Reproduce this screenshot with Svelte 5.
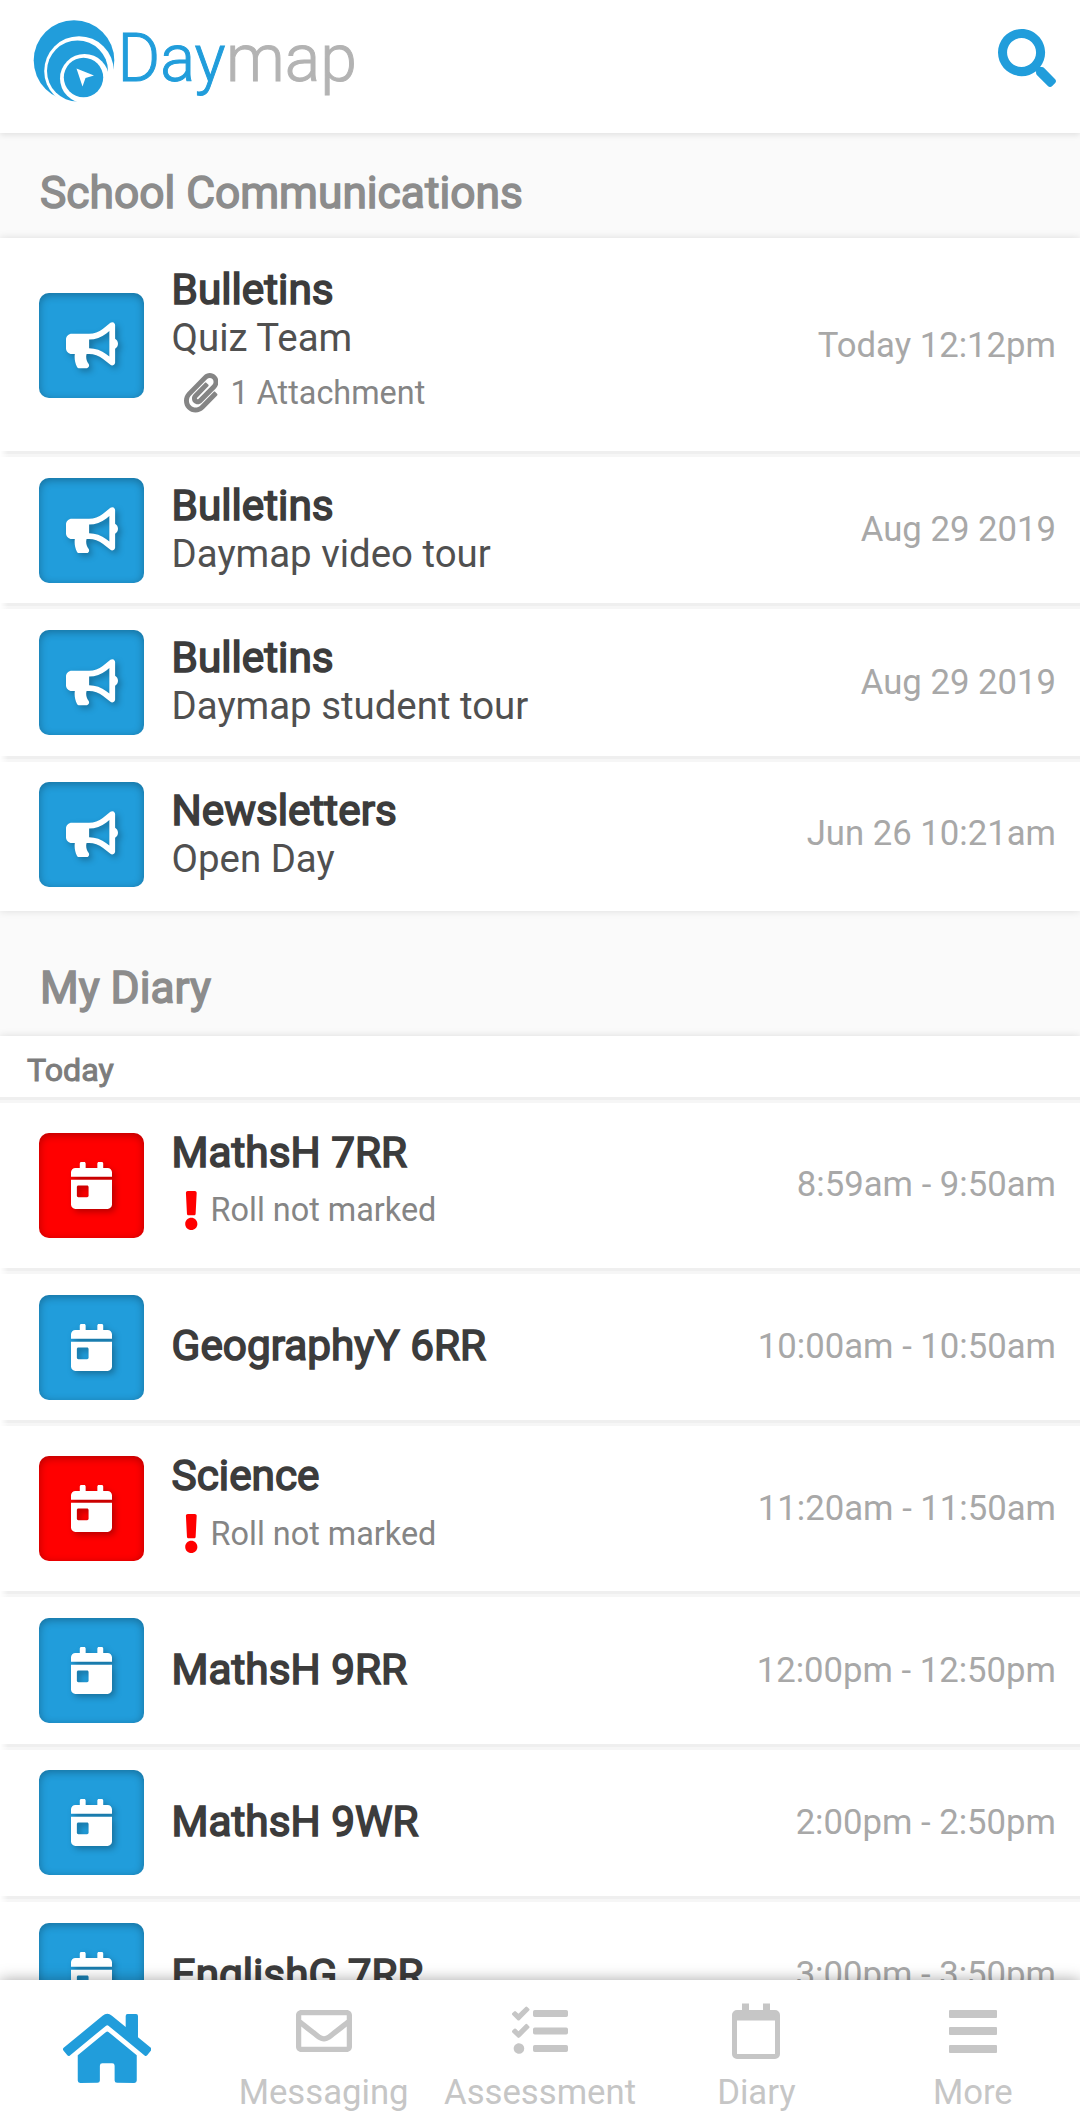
<script>
  const bulletins = [
    { title: 'Bulletins', text: 'Quiz Team', attachments: 1, time: 'Today 12:12pm' },
    { title: 'Bulletins', text: 'Daymap video tour', time: 'Aug 29 2019' },
    { title: 'Bulletins', text: 'Daymap student tour', time: 'Aug 29 2019' },
    { title: 'Newsletters', text: 'Open Day', time: 'Jun 26 10:21am' }
  ];

  const lessons = [
    { title: 'MathsH 7RR', time: '8:59am - 9:50am', unmarked: true },
    { title: 'GeographyY 6RR', time: '10:00am - 10:50am' },
    { title: 'Science', time: '11:20am - 11:50am', unmarked: true },
    { title: 'MathsH 9RR', time: '12:00pm - 12:50pm' },
    { title: 'MathsH 9WR', time: '2:00pm - 2:50pm' },
    { title: 'EnglishG 7RR', time: '3:00pm - 3:50pm' }
  ];
</script>

<div class="app">
  <header>
    <svg class="logo" width="340" height="90" viewBox="0 0 340 90">
      <circle cx="44" cy="48.5" r="40.3" fill="#219ddb" />
      <circle cx="49" cy="59" r="34.8" fill="#fff" />
      <circle cx="47.5" cy="59" r="30.5" fill="#219ddb" />
      <circle cx="54.5" cy="66.5" r="24.5" fill="#fff" />
      <circle cx="53.5" cy="65.5" r="19.7" fill="#219ddb" />
      <path d="M46.5 56.5l17.5 7-8.5 2.5-3 8.5z" fill="#fff" />
      <text x="87.5" y="68.5" class="day" textLength="108" lengthAdjust="spacingAndGlyphs">Day</text>
      <text x="196" y="68.5" class="map" textLength="131" lengthAdjust="spacingAndGlyphs">map</text>
    </svg>
    <button class="search" aria-label="Search">
      <svg width="58" height="58" viewBox="0 0 512 512">
        <path d="M505 442.7L405.3 343c-4.5-4.5-10.6-7-17-7H372c27.6-35.3 44-79.7 44-128C416 93.1 322.9 0 208 0S0 93.1 0 208s93.1 208 208 208c48.3 0 92.7-16.4 128-44v16.3c0 6.4 2.5 12.5 7 17l99.7 99.7c9.4 9.4 24.6 9.4 33.9 0l28.3-28.3c9.4-9.4 9.4-24.6.1-34zM208 336c-70.7 0-128-57.2-128-128 0-70.7 57.2-128 128-128 70.7 0 128 57.2 128 128 0 70.7-57.2 128-128 128z" />
      </svg>
    </button>
  </header>

  <main>
    <h2>School Communications</h2>
    <div class="list">
      {#each bulletins as item}
        <div class="row" class:attached={item.attachments}>
          <div class="tile">
            <svg width="52" height="46.5" viewBox="0 0 576 512">
              <path d="M576 240c0-23.63-12.95-44.04-32-55.12V32.01C544 23.26 537.02 0 512 0c-7.12 0-14.19 2.38-19.98 7.02l-85.03 68.03C364.28 109.19 310.66 128 256 128H64c-35.35 0-64 28.65-64 64v96c0 35.35 28.65 64 64 64h33.7c-1.39 10.48-2.18 21.14-2.18 32 0 39.77 9.26 77.35 25.56 110.94 5.19 10.69 16.52 17.06 28.4 17.06h74.28c26.05 0 41.69-29.84 25.9-50.56-16.4-21.52-26.15-48.36-26.15-77.44 0-11.11 1.62-21.79 4.41-32H256c54.66 0 108.28 18.81 150.98 52.95l85.03 68.03a32.023 32.023 0 0 0 19.98 7.02c24.92 0 32-22.78 32-32V295.13C563.05 284.04 576 263.63 576 240zm-96 141.42l-33.05-26.44C392.95 311.78 325.12 288 256 288v-96c69.12 0 136.95-23.78 190.95-66.98L480 98.58v282.84z" />
            </svg>
          </div>
          <div class="body">
            <div class="title">{item.title}</div>
            <div class="text">{item.text}</div>
            {#if item.attachments}
              <div class="note attachment">
                <svg width="34.5" height="39.5" viewBox="0 0 448 512">
                  <path d="M43.246 466.142c-58.43-60.289-57.341-157.511 1.386-217.581L254.392 34c44.316-45.332 116.351-45.336 160.671 0 43.89 44.894 43.943 117.329 0 162.276L232.214 383.128c-29.855 30.537-78.633 30.111-107.982-.998-28.275-29.97-27.368-77.473 1.452-106.953l143.743-146.835c6.182-6.314 16.312-6.422 22.626-.241l22.861 22.379c6.315 6.182 6.422 16.312.241 22.626L171.427 319.927c-4.932 5.045-5.236 13.428-.648 18.292 4.372 4.634 11.245 4.711 15.688.165l182.849-186.851c19.613-20.062 19.613-52.725-.011-72.798-19.189-19.627-49.957-19.637-69.154 0L90.39 293.295c-34.763 35.56-35.299 93.12-1.191 128.313 34.01 35.093 88.985 35.137 123.058.286l172.06-175.999c6.177-6.319 16.307-6.433 22.626-.256l22.877 22.364c6.319 6.177 6.434 16.307.256 22.626l-172.06 175.998c-59.576 60.938-155.943 60.216-214.77-.485z" />
                </svg>
                <span>{item.attachments} Attachment</span>
              </div>
            {/if}
          </div>
          <div class="time">{item.time}</div>
        </div>
      {/each}
    </div>

    <h2 class="diary">My Diary</h2>
    <div class="list">
      <div class="day-label">Today</div>
      {#each lessons as lesson}
        <div class="row lesson" class:unmarked={lesson.unmarked}>
          <div class="tile" class:red={lesson.unmarked}>
            <svg width="41" height="47" viewBox="0 0 448 512">
              <path d="M0 464c0 26.5 21.5 48 48 48h352c26.5 0 48-21.5 48-48V192H0v272zm64-192c0-8.8 7.2-16 16-16h96c8.8 0 16 7.2 16 16v96c0 8.8-7.2 16-16 16H80c-8.8 0-16-7.2-16-16v-96zM400 64h-48V16c0-8.8-7.2-16-16-16h-32c-8.8 0-16 7.2-16 16v48H160V16c0-8.8-7.2-16-16-16h-32c-8.8 0-16 7.2-16 16v48H48C21.5 64 0 85.5 0 112v48h448v-48c0-26.5-21.5-48-48-48z" />
            </svg>
          </div>
          <div class="body">
            <div class="title">{lesson.title}</div>
            {#if lesson.unmarked}
              <div class="note">
                <svg class="alert" width="14.6" height="39" viewBox="0 0 192 512">
                  <path d="M176 432c0 44.112-35.888 80-80 80s-80-35.888-80-80 35.888-80 80-80 80 35.888 80 80zM25.26 25.199l13.6 272C39.499 309.972 50.041 320 62.83 320h66.34c12.789 0 23.331-10.028 23.97-22.801l13.6-272C167.425 11.49 156.496 0 142.77 0H49.23C35.504 0 24.575 11.49 25.26 25.199z" />
                </svg>
                <span>Roll not marked</span>
              </div>
            {/if}
          </div>
          <div class="time">{lesson.time}</div>
        </div>
      {/each}
    </div>
  </main>

  <nav>
    <button class="active" aria-label="Home">
      <svg width="88.5" height="79" viewBox="0 0 576 512">
        <path d="M280.37 148.26L96 300.11V464a16 16 0 0 0 16 16l112.06-.29a16 16 0 0 0 15.92-16V368a16 16 0 0 1 16-16h64a16 16 0 0 1 16 16v95.64a16 16 0 0 0 16 16.05L464 480a16 16 0 0 0 16-16V300L295.67 148.26a12.19 12.19 0 0 0-15.3 0zM571.6 251.47L488 182.56V44.05a12 12 0 0 0-12-12h-56a12 12 0 0 0-12 12v72.61L318.47 43a48 48 0 0 0-61 0L4.34 251.47a12 12 0 0 0-1.6 16.9l25.5 31A12 12 0 0 0 45.15 301l235.22-193.74a12.19 12.19 0 0 1 15.3 0L530.9 301a12 12 0 0 0 16.9-1.6l25.5-31a12 12 0 0 0-1.7-16.93z" />
      </svg>
    </button>
    <button>
      <svg width="56" height="56" viewBox="0 0 512 512">
        <path d="M464 64H48C21.49 64 0 85.49 0 112v288c0 26.51 21.49 48 48 48h416c26.51 0 48-21.49 48-48V112c0-26.51-21.49-48-48-48zm0 48v40.805c-22.422 18.259-58.168 46.651-134.587 106.49-16.841 13.247-50.201 45.072-73.413 44.701-23.208.375-56.579-31.459-73.413-44.701C106.18 199.465 70.425 171.067 48 152.805V112h416zM48 400V214.398c22.914 18.251 55.409 43.862 104.938 82.646 21.857 17.205 60.134 55.186 103.062 54.955 42.717.231 80.509-37.199 103.053-54.947 49.528-38.783 82.032-64.401 104.947-82.653V400H48z" />
      </svg>
      <span>Messaging</span>
    </button>
    <button>
      <svg width="56" height="56" viewBox="0 0 512 512">
        <path d="M139.61 35.5a12 12 0 0 0-17 0L58.93 98.81l-22.7-22.12a12 12 0 0 0-17 0L3.53 92.41a12 12 0 0 0 0 17l47.59 47.4a12.78 12.78 0 0 0 17.61 0l15.59-15.62L156.52 69a12.09 12.09 0 0 0 .09-17zm0 159.19a12 12 0 0 0-17 0l-63.68 63.72-22.7-22.1a12 12 0 0 0-17 0L3.53 252a12 12 0 0 0 0 17L51 316.5a12.77 12.77 0 0 0 17.6 0l15.7-15.69 72.2-72.22a12 12 0 0 0 .09-16.9zM64 368c-26.49 0-48.59 21.5-48.59 48S37.53 464 64 464a48 48 0 0 0 0-96zm432 16H208a16 16 0 0 0-16 16v32a16 16 0 0 0 16 16h288a16 16 0 0 0 16-16v-32a16 16 0 0 0-16-16zm0-320H208a16 16 0 0 0-16 16v32a16 16 0 0 0 16 16h288a16 16 0 0 0 16-16V80a16 16 0 0 0-16-16zm0 160H208a16 16 0 0 0-16 16v32a16 16 0 0 0 16 16h288a16 16 0 0 0 16-16v-32a16 16 0 0 0-16-16z" />
      </svg>
      <span>Assessment</span>
    </button>
    <button>
      <svg width="56" height="56" viewBox="0 0 56 56">
        <path fill-rule="evenodd" d="M14 .5h7V7h14V.5h7V7h5a5 5 0 0 1 5 5v39a5 5 0 0 1-5 5H9a5 5 0 0 1-5-5V12a5 5 0 0 1 5-5h5zM9 17.5V51h38V17.5z" />
      </svg>
      <span>Diary</span>
    </button>
    <button>
      <svg width="56" height="56" viewBox="0 0 56 56">
        <rect x="4" y="7" width="48" height="8" rx="1" />
        <rect x="4" y="24" width="48" height="8" rx="1" />
        <rect x="4" y="42" width="48" height="8" rx="1" />
      </svg>
      <span>More</span>
    </button>
  </nav>
</div>

<style>
  :global(body) {
    margin: 0;
    background: #fafafa;
  }

  .app {
    display: flex;
    flex-direction: column;
    height: 2118px;
    overflow: hidden;
    background: #fafafa;
    font-family: Roboto, sans-serif;
  }

  svg {
    display: block;
    flex: none;
    fill: currentColor;
  }

  button {
    padding: 0;
    border: none;
    background: none;
    font: inherit;
    color: inherit;
  }

  header {
    flex: none;
    display: flex;
    justify-content: space-between;
    height: 133px;
    box-sizing: border-box;
    padding: 12px 24px 0 30px;
    background: #fff;
    box-shadow: 0 2px 6px rgba(0, 0, 0, 0.1);
  }

  .logo text {
    font-size: 67px;
    font-weight: 300;
    stroke-width: 1px;
  }

  .logo .day {
    fill: #219ddb;
    stroke: #219ddb;
  }

  .logo .map {
    fill: #b3b3b3;
    stroke: #b3b3b3;
  }

  .search {
    align-self: flex-start;
    margin-top: 17px;
    color: #219ddb;
  }

  main {
    flex: 1;
    min-height: 0;
    overflow: hidden;
  }

  h2 {
    height: 105px;
    margin: 0;
    padding: 8px 40px 0;
    box-sizing: border-box;
    font-size: 44.3px;
    font-weight: 400;
    line-height: 105px;
    color: #8c8c8c;
    -webkit-text-stroke: 1.5px #8c8c8c;
  }

  h2.diary {
    height: 125px;
    padding-top: 25px;
  }

  .list {
    box-shadow: 0 0 8px rgba(0, 0, 0, 0.12);
    background: #fff;
  }

  /* the strip between two rows fades out downwards and at the left edge */
  .row {
    display: flex;
    align-items: center;
    height: 152.35px;
    padding: 0 24px 6px 39px;
    box-sizing: border-box;
    background: linear-gradient(to right, #fff, transparent 8px) bottom / 100% 6px no-repeat,
      linear-gradient(#efefef 50%, #f6f6f6 50%) bottom / 100% 6px no-repeat, #fff;
  }

  .row.attached {
    height: 219px;
    padding-bottom: 4px;
  }

  .row.unmarked {
    height: 171.2px;
  }

  .row:last-child {
    height: 149px;
    padding-bottom: 4px;
    background: #fff;
  }

  .row.lesson:last-child {
    padding-bottom: 3px;
  }

  .tile {
    flex: none;
    display: flex;
    align-items: center;
    justify-content: center;
    width: 105px;
    height: 105px;
    border-radius: 10px;
    background: #219ddb;
    box-shadow: inset 0 2px 8px rgba(0, 0, 0, 0.3);
    color: #fff;
  }

  .tile.red {
    background: #f00;
  }

  .tile svg {
    filter: drop-shadow(3px 3px 3px rgba(0, 0, 0, 0.28));
  }

  .body {
    flex: 1;
    margin: -1px 0 0 27.6px;
  }

  .attached .body {
    margin-top: -1px;
  }

  .row:last-child .body {
    margin-top: 1px;
  }

  .title {
    font-size: 42.3px;
    line-height: 48px;
    color: #3c3c3c;
    -webkit-text-stroke: 1.6px #3c3c3c;
  }

  .lesson .title {
    margin-top: -1px;
  }

  .text {
    font-size: 38.4px;
    line-height: 48px;
    color: #505050;
  }

  .note {
    display: flex;
    align-items: center;
    gap: 12px;
    height: 60px;
    padding-left: 12.4px;
    font-size: 32.4px;
    color: #858585;
  }

  .lesson .note {
    height: 67px;
    margin-bottom: -4px;
  }

  .attachment {
    height: 62px;
  }

  .alert {
    color: #f00;
  }

  .time {
    margin-top: -2px;
    font-size: 34.7px;
    color: #a8a8a8;
  }

  .day-label {
    height: 67px;
    padding-left: 27px;
    box-sizing: border-box;
    background: linear-gradient(#efefef 50%, #f6f6f6 50%) bottom / 100% 6px no-repeat, #fff;
    font-size: 32.2px;
    line-height: 68px;
    color: #7c7c7c;
    -webkit-text-stroke: 1px #7c7c7c;
  }

  nav {
    position: relative;
    flex: none;
    display: flex;
    height: 138px;
    background: #fff;
    box-shadow: 0 0 14px rgba(0, 0, 0, 0.35);
    color: #c6c6c6;
  }

  nav button {
    flex: 1 1 0;
    display: flex;
    flex-direction: column;
    align-items: center;
    padding: 23px 0 0 2px;
    font-size: 34.7px;
    line-height: 40px;
  }

  nav span {
    margin-top: 13px;
  }

  nav .active {
    padding: 29px 0 0;
    color: #219ddb;
  }
</style>
